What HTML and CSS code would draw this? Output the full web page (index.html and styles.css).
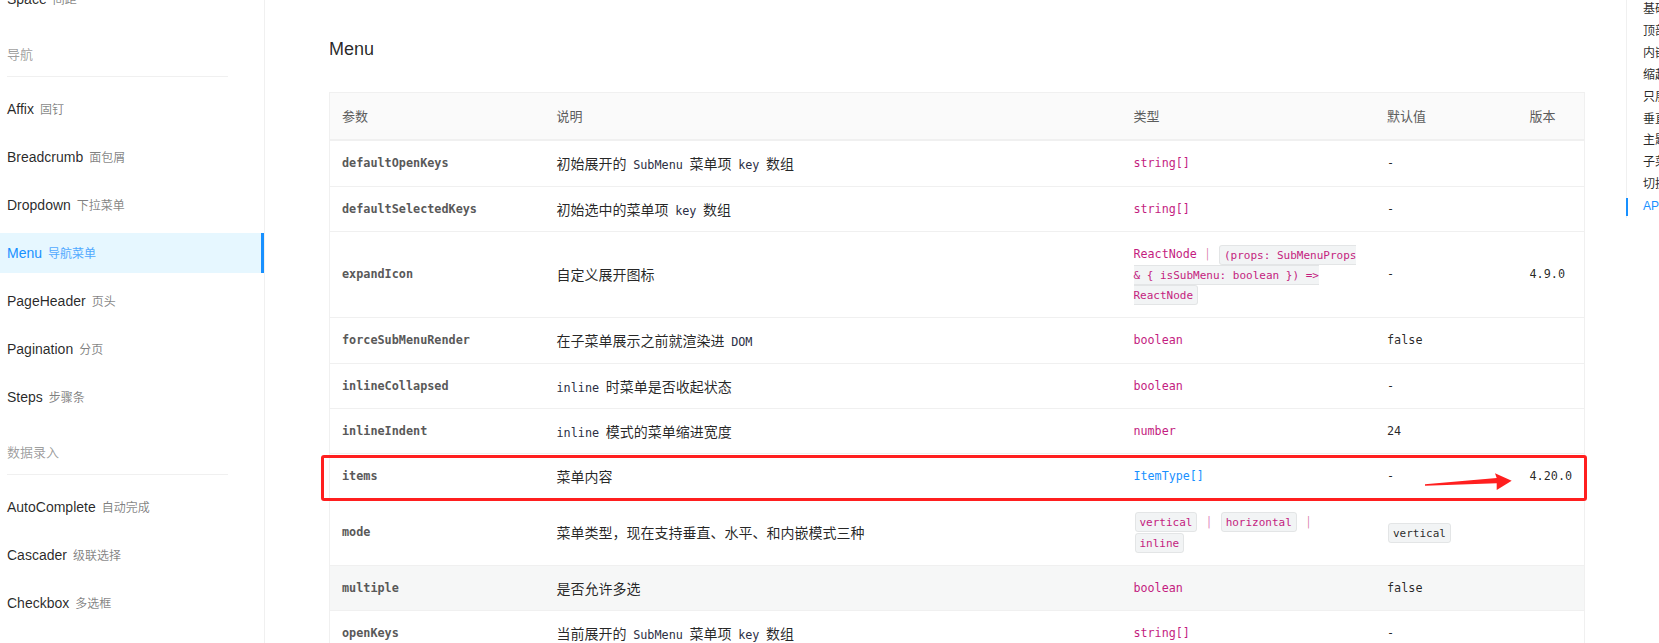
FILE: index.html
```html
<!DOCTYPE html>
<html lang="zh-CN">
<head>
<meta charset="utf-8">
<title>Menu 导航菜单</title>
<link rel="stylesheet" href="styles.css">
</head>
<body>
<div class="page">
  <aside class="side">
    <nav class="side-menu">
      <div class="item"><span class="en">Space</span><span class="zh">间距</span></div>
      <section class="group">
        <div class="group-title">导航</div>
        <div class="group-divider"></div>
        <div class="item"><span class="en">Affix</span><span class="zh">固钉</span></div>
        <div class="item"><span class="en">Breadcrumb</span><span class="zh">面包屑</span></div>
        <div class="item"><span class="en">Dropdown</span><span class="zh">下拉菜单</span></div>
        <div class="item active"><span class="en">Menu</span><span class="zh">导航菜单</span></div>
        <div class="item"><span class="en">PageHeader</span><span class="zh">页头</span></div>
        <div class="item"><span class="en">Pagination</span><span class="zh">分页</span></div>
        <div class="item"><span class="en">Steps</span><span class="zh">步骤条</span></div>
      </section>
      <section class="group">
        <div class="group-title">数据录入</div>
        <div class="group-divider"></div>
        <div class="item"><span class="en">AutoComplete</span><span class="zh">自动完成</span></div>
        <div class="item"><span class="en">Cascader</span><span class="zh">级联选择</span></div>
        <div class="item"><span class="en">Checkbox</span><span class="zh">多选框</span></div>
        <div class="item"><span class="en">DatePicker</span><span class="zh">日期选择框</span></div>
      </section>
    </nav>
  </aside>

  <main class="main">
    <h3 class="title">Menu</h3>
    <div class="api">
      <table class="api-table">
        <colgroup>
          <col class="c1"><col class="c2"><col class="c3"><col class="c4"><col class="c5">
        </colgroup>
        <thead>
          <tr><th>参数</th><th>说明</th><th>类型</th><th>默认值</th><th>版本</th></tr>
        </thead>
        <tbody>
          <tr>
            <td class="name">defaultOpenKeys</td>
            <td class="desc">初始展开的 <code>SubMenu</code> 菜单项 <code>key</code> 数组</td>
            <td class="type">string[]</td>
            <td class="def">-</td>
            <td class="ver"></td>
          </tr>
          <tr>
            <td class="name">defaultSelectedKeys</td>
            <td class="desc">初始选中的菜单项 <code>key</code> 数组</td>
            <td class="type">string[]</td>
            <td class="def">-</td>
            <td class="ver"></td>
          </tr>
          <tr>
            <td class="name">expandIcon</td>
            <td class="desc">自定义展开图标</td>
            <td class="type">ReactNode <span class="sep">|</span> <code class="tag">(props: SubMenuProps &amp; { isSubMenu: boolean }) =&gt; ReactNode</code></td>
            <td class="def">-</td>
            <td class="ver">4.9.0</td>
          </tr>
          <tr>
            <td class="name">forceSubMenuRender</td>
            <td class="desc">在子菜单展示之前就渲染进 <code>DOM</code></td>
            <td class="type">boolean</td>
            <td class="def">false</td>
            <td class="ver"></td>
          </tr>
          <tr>
            <td class="name">inlineCollapsed</td>
            <td class="desc"><code>inline</code> 时菜单是否收起状态</td>
            <td class="type">boolean</td>
            <td class="def">-</td>
            <td class="ver"></td>
          </tr>
          <tr>
            <td class="name">inlineIndent</td>
            <td class="desc"><code>inline</code> 模式的菜单缩进宽度</td>
            <td class="type">number</td>
            <td class="def">24</td>
            <td class="ver"></td>
          </tr>
          <tr>
            <td class="name">items</td>
            <td class="desc">菜单内容</td>
            <td class="type"><span class="link">ItemType[]</span></td>
            <td class="def">-</td>
            <td class="ver">4.20.0</td>
          </tr>
          <tr>
            <td class="name">mode</td>
            <td class="desc">菜单类型，现在支持垂直、水平、和内嵌模式三种</td>
            <td class="type"><code class="tag">vertical</code> <span class="sep">|</span> <code class="tag">horizontal</code> <span class="sep">|</span> <code class="tag">inline</code></td>
            <td class="def"><code class="tag plain">vertical</code></td>
            <td class="ver"></td>
          </tr>
          <tr class="hover">
            <td class="name">multiple</td>
            <td class="desc">是否允许多选</td>
            <td class="type">boolean</td>
            <td class="def">false</td>
            <td class="ver"></td>
          </tr>
          <tr>
            <td class="name">openKeys</td>
            <td class="desc">当前展开的 <code>SubMenu</code> 菜单项 <code>key</code> 数组</td>
            <td class="type">string[]</td>
            <td class="def">-</td>
            <td class="ver"></td>
          </tr>
          <tr>
            <td class="name">overflowedIndicator</td>
            <td class="desc">自定义 Menu 折叠时的图标</td>
            <td class="type">ReactNode</td>
            <td class="def">-</td>
            <td class="ver"></td>
          </tr>
        </tbody>
      </table>
      <div class="mark-box"></div>
      <svg class="mark-arrow" viewBox="0 0 96 24" aria-hidden="true">
        <polygon points="5,16.3 76.7,9.9 75,5.3 91.7,12.7 76.7,22 76.7,15.3 5,17.7" fill="#ff1f1f"/>
      </svg>
    </div>
  </main>

  <aside class="toc">
    <ul>
      <li>基础用法</li>
      <li>顶部导航</li>
      <li>内嵌菜单</li>
      <li>缩起内嵌菜单</li>
      <li>只展开当前父级菜单</li>
      <li>垂直菜单</li>
      <li>主题</li>
      <li>子菜单主题</li>
      <li>切换菜单类型</li>
      <li class="active">API</li>
    </ul>
  </aside>
</div>
</body>
</html>
```
FILE: styles.css
```css
* { box-sizing: border-box; }

html, body {
  margin: 0;
  padding: 0;
  background: #fff;
}

body {
  font-family: "Liberation Sans", "Noto Sans CJK SC", sans-serif;
  font-size: 14px;
  color: rgba(0, 0, 0, 0.85);
  overflow: hidden;
}

.page {
  display: flex;
  height: 643px;
  overflow: hidden;
}

/* ---------- side menu ---------- */
.side {
  flex: 0 0 265px;
  border-right: 1px solid #f0f0f0;
  overflow: hidden;
}

.side-menu {
  margin-top: -21px;
}

.item {
  position: relative;
  height: 40px;
  line-height: 40px;
  padding-left: 7px;
  margin-bottom: 8px;
  white-space: nowrap;
  font-size: 14px;
  color: rgba(0, 0, 0, 0.85);
}

.item .zh {
  margin-left: 6px;
  font-family: "Noto Sans CJK SC", sans-serif;
  font-size: 12px;
  color: rgba(0, 0, 0, 0.5);
}

.item.active {
  background: #e6f7ff;
  color: #1890ff;
}

.item.active .zh {
  color: #1890ff;
  opacity: 0.75;
}

.item.active::after {
  content: "";
  position: absolute;
  right: 0;
  top: 0;
  bottom: 0;
  width: 3px;
  background: #1890ff;
}

.group {
  padding-top: 16px;
}

.group-title {
  padding-left: 7px;
  line-height: 22px;
  font-family: "Noto Sans CJK SC", sans-serif;
  font-size: 13px;
  color: rgba(0, 0, 0, 0.4);
}

.group-divider {
  width: 221px;
  height: 1px;
  margin: 11px 0 12px 7px;
  background: #f0f0f0;
}

/* ---------- main ---------- */
.main {
  flex: 1 1 auto;
  min-width: 0;
  padding: 35px 41px 0 64px;
}

.title {
  margin: 0 0 29px;
  font-size: 18px;
  line-height: 28px;
  font-weight: 500;
  color: rgba(0, 0, 0, 0.85);
}

.api {
  position: relative;
}

.api-table {
  width: 100%;
  table-layout: fixed;
  border-collapse: separate;
  border-spacing: 0;
  border: 1px solid #f0f0f0;
}

.c1 { width: 214.5px; }
.c2 { width: 577px; }
.c3 { width: 253.5px; }
.c4 { width: 142.5px; }
.c5 { width: 66.5px; }

.api-table th {
  padding: 13px 12px;
  background: #fafafa;
  border-bottom: 2px solid #f0f0f0;
  text-align: left;
  font-weight: normal;
  font-family: "Noto Sans CJK SC", sans-serif;
  font-size: 13px;
  line-height: 20.25px;
  color: #5c5c5c;
  white-space: nowrap;
}

.api-table td {
  padding: 12.1px 12px;
  border-bottom: 1px solid #f0f0f0;
  vertical-align: middle;
  font-family: "DejaVu Sans Mono", "Noto Sans CJK SC", monospace;
  font-size: 11.8px;
  line-height: 20.25px;
  color: rgba(0, 0, 0, 0.85);
}

.api-table tr.hover td {
  background: #f6f7f7;
}

.api-table td.name {
  font-weight: 600;
  color: #595959;
  white-space: nowrap;
}

.api-table td.desc {
  font-family: "Noto Sans CJK SC", sans-serif;
  font-size: 14px;
  word-spacing: 3.5px;
}

.api-table td.desc code {
  font-family: "DejaVu Sans Mono", monospace;
  font-size: 11.8px;
  line-height: 1;
  color: #2b2f45;
}

.api-table td.type {
  color: #c41d7f;
  font-size: 11.7px;
}

.api-table td.ver,
.api-table td.def {
  white-space: nowrap;
}

.tag {
  margin: 0 1px;
  padding: 2.5px 4px;
  font-family: "DejaVu Sans Mono", monospace;
  font-size: 11px;
  line-height: 1;
  background: #f2f4f5;
  border: 1px solid rgba(0, 0, 0, 0.06);
  border-radius: 3px;
  color: #c41d7f;
}

.tag.plain {
  color: rgba(0, 0, 0, 0.85);
}

.sep {
  color: rgba(196, 29, 127, 0.55);
}

.link {
  color: #1890ff;
}

/* annotation overlay */
.mark-box {
  position: absolute;
  left: -8.4px;
  top: 363px;
  width: 1266px;
  height: 46px;
  border: 3px solid #ff1f1f;
  border-radius: 3px;
  pointer-events: none;
}

.mark-arrow {
  position: absolute;
  left: 1091px;
  top: 376px;
  width: 96px;
  height: 24px;
}

/* ---------- toc ---------- */
.toc {
  flex: 0 0 33px;
  overflow: hidden;
}

.toc ul {
  list-style: none;
  width: 200px;
  margin: -1px 0 0;
  padding: 0;
  border-left: 1px solid #f0f0f0;
}

.toc li {
  position: relative;
  padding-left: 16px;
  line-height: 21.9px;
  font-family: "Liberation Sans", "Noto Sans CJK SC", sans-serif;
  font-size: 12px;
  white-space: nowrap;
  color: rgba(0, 0, 0, 0.85);
}

.toc li.active {
  color: #1890ff;
}

.toc li.active::before {
  content: "";
  position: absolute;
  left: -1px;
  top: 2px;
  bottom: 2px;
  width: 2px;
  background: #1890ff;
}
```
